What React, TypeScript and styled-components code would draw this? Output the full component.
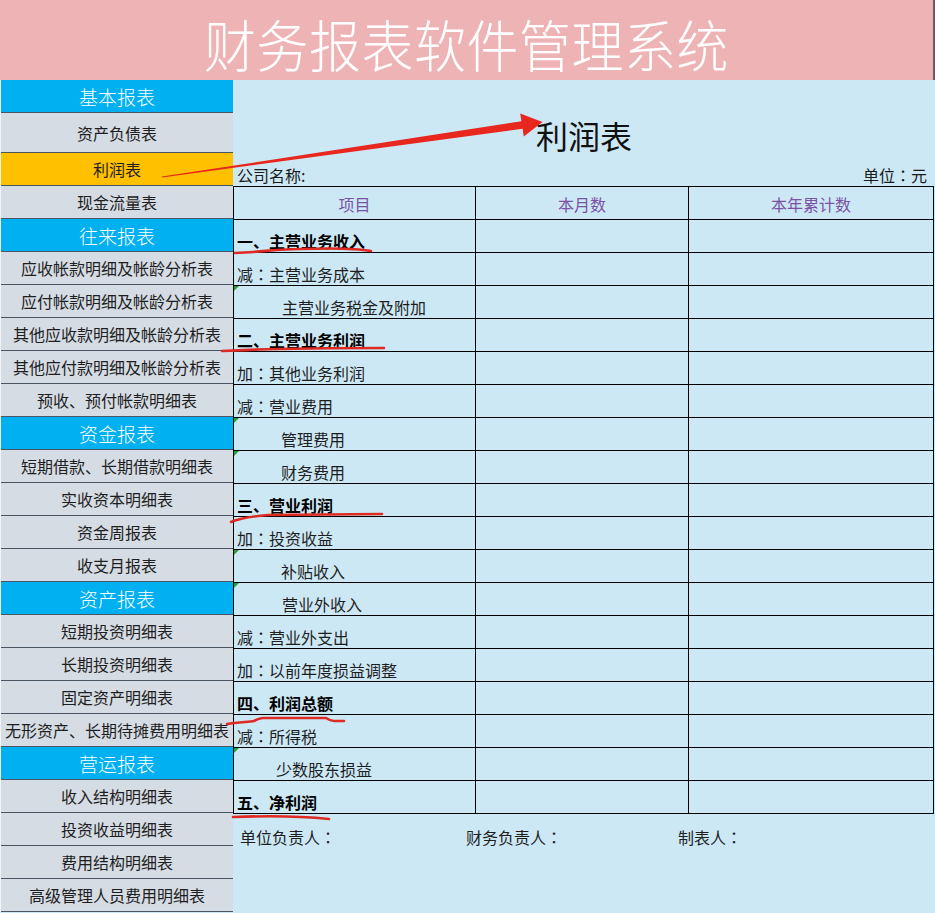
import React from "react"
import styled, { createGlobalStyle } from "styled-components"

const FONT = `"Noto Sans CJK SC", "Microsoft YaHei", "Noto Sans", sans-serif`

const GlobalStyle = createGlobalStyle`
  html, body {
    margin: 0;
    padding: 0;
    background: #ffffff;
  }
  body {
    font-family: ${FONT};
  }
  * {
    box-sizing: border-box;
  }
`

type NavEntry = {
  label: string
  kind?: "cat" | "item"
  tall?: boolean
  active?: boolean
}

const navItems: NavEntry[] = [
  { label: "基本报表", kind: "cat" },
  { label: "资产负债表", tall: true },
  { label: "利润表", active: true },
  { label: "现金流量表" },
  { label: "往来报表", kind: "cat" },
  { label: "应收帐款明细及帐龄分析表" },
  { label: "应付帐款明细及帐龄分析表" },
  { label: "其他应收款明细及帐龄分析表" },
  { label: "其他应付款明细及帐龄分析表" },
  { label: "预收、预付帐款明细表" },
  { label: "资金报表", kind: "cat" },
  { label: "短期借款、长期借款明细表" },
  { label: "实收资本明细表" },
  { label: "资金周报表" },
  { label: "收支月报表" },
  { label: "资产报表", kind: "cat" },
  { label: "短期投资明细表" },
  { label: "长期投资明细表" },
  { label: "固定资产明细表" },
  { label: "无形资产、长期待摊费用明细表" },
  { label: "营运报表", kind: "cat" },
  { label: "收入结构明细表" },
  { label: "投资收益明细表" },
  { label: "费用结构明细表" },
  { label: "高级管理人员费用明细表" },
]

type LineItem = {
  label: string
  bold?: boolean
  indent?: number
  mark?: boolean
}

const lineItems: LineItem[] = [
  { label: "一、主营业务收入", bold: true },
  { label: "减：主营业务成本" },
  { label: "主营业务税金及附加", indent: 48, mark: true },
  { label: "二、主营业务利润", bold: true },
  { label: "加：其他业务利润" },
  { label: "减：营业费用" },
  { label: "管理费用", indent: 47, mark: true },
  { label: "财务费用", indent: 47, mark: true },
  { label: "三、营业利润", bold: true },
  { label: "加：投资收益" },
  { label: "补贴收入", indent: 47, mark: true },
  { label: "营业外收入", indent: 48, mark: true },
  { label: "减：营业外支出" },
  { label: "加：以前年度损益调整" },
  { label: "四、利润总额", bold: true },
  { label: "减：所得税" },
  { label: "少数股东损益", indent: 42, mark: true },
  { label: "五、净利润", bold: true },
]

// hand-drawn red marks over the sheet
const underlines = [
  "M235 253 C 260 252, 280 249, 300 249 C 330 248, 355 248, 371 251",
  "M222 351 C 260 349, 320 348, 384 348",
  "M231 522 C 240 518, 255 516, 268 515 L 382 514",
  "M227 724 C 238 722, 248 722, 254 721 C 258 719, 260 718, 263 718 L 326 718 C 329 720, 331 721, 334 721 L 344 721",
  "M233 817 C 260 816, 300 816, 329 819",
]

// the sheet uses a centred full-width colon
const withColon = (text: string) => {
  const parts = text.split("：")
  return parts.map((part, i) => (
    <React.Fragment key={i}>
      {part}
      {i < parts.length - 1 && <Colon>：</Colon>}
    </React.Fragment>
  ))
}

export default function App() {
  return (
    <>
      <GlobalStyle />
      <Page>
        <Banner>
          <BannerTitle>财务报表软件管理系统</BannerTitle>
        </Banner>
        <Body>
          <Sidebar>
            {navItems.map((item) => (
              <NavRow
                key={item.label}
                $kind={item.kind || "item"}
                $tall={!!item.tall}
                $active={!!item.active}
              >
                {item.label}
              </NavRow>
            ))}
          </Sidebar>
          <Sheet>
            <SheetTitle>利润表</SheetTitle>
            <MetaRow>
              <span>公司名称:</span>
              <span>{withColon("单位：元")}</span>
            </MetaRow>
            <Table>
              <HeadCell>项目</HeadCell>
              <HeadCell>本月数</HeadCell>
              <HeadCell>本年累计数</HeadCell>
              {lineItems.map((row) => (
                <React.Fragment key={row.label}>
                  <LabelCell
                    $bold={!!row.bold}
                    $indent={row.indent || 3}
                    $mark={!!row.mark}
                  >
                    {withColon(row.label)}
                  </LabelCell>
                  <Cell />
                  <Cell />
                </React.Fragment>
              ))}
            </Table>
            <Signatures>
              <span>{withColon("单位负责人：")}</span>
              <span>{withColon("财务负责人：")}</span>
              <span>{withColon("制表人：")}</span>
            </Signatures>
          </Sheet>
        </Body>
        <Annotations viewBox="0 0 935 913" width="935" height="913">
          <polygon
            points="162,176.6 521.4,121.3 520.2,113.6 542.5,122 523.8,136.4 522.6,128.7 162,177.6"
            fill="#e8281f"
          />
          {underlines.map((d) => (
            <path
              key={d}
              d={d}
              fill="none"
              stroke="#de2a22"
              strokeWidth="2.6"
              strokeLinecap="round"
              strokeLinejoin="round"
            />
          ))}
        </Annotations>
      </Page>
    </>
  )
}

// Styled Components
const Page = styled.div`
  position: relative;
  width: 935px;
  height: 913px;
  overflow: hidden;
  font-family: ${FONT};
  background: #cde8f5;
`

const Banner = styled.header`
  height: 80px;
  background: #eeb4b5;
  border-right: 2px solid #6b5b5b;
  display: flex;
  align-items: center;
  justify-content: center;
  padding-top: 6px;
`

const BannerTitle = styled.h1`
  margin: 0;
  font-family: ${FONT};
  font-size: 52px;
  font-weight: 300;
  line-height: 1;
  color: #ffffff;
  letter-spacing: 0.5px;
  transform: scaleY(1.08);
`

const Body = styled.div`
  display: grid;
  grid-template-columns: 233px 702px;
`

const Sidebar = styled.nav`
  display: flex;
  flex-direction: column;
  border-left: 1px solid #f2f4f7;
`

const NavRow = styled.div<{
  $kind: "cat" | "item"
  $tall: boolean
  $active: boolean
}>`
  height: ${({ $tall }) => ($tall ? 40 : 33)}px;
  display: flex;
  align-items: center;
  justify-content: center;
  white-space: nowrap;
  border-bottom: 1px solid #4a5563;
  font-size: ${({ $kind }) => ($kind === "cat" ? 19 : 16)}px;
  font-weight: ${({ $kind }) => ($kind === "cat" ? 300 : 400)};
  color: ${({ $kind }) => ($kind === "cat" ? "#ffffff" : "#1e1e1e")};
  background: ${({ $kind, $active }) =>
    $active ? "#ffc000" : $kind === "cat" ? "#00b0f0" : "#d6dce4"};
`

const Sheet = styled.main`
  display: flex;
  flex-direction: column;
  background: #cde8f5;
`

const SheetTitle = styled.div`
  height: 84px;
  padding-top: 39px;
  text-align: center;
  font-size: 32px;
  line-height: 32px;
  color: #111111;
`

const MetaRow = styled.div`
  height: 22px;
  display: flex;
  justify-content: space-between;
  padding: 0 8px 0 4px;
  font-size: 16px;
  line-height: 22px;
  color: #1a1a1a;
`

const Colon = styled.span`
  font-family: "Noto Sans CJK TC", ${FONT};
  font-weight: 400;
`

const Table = styled.div`
  display: grid;
  grid-template-columns: 242px 213px 245px;
  width: 701px;
  border-top: 1px solid #000000;
  border-left: 1px solid #000000;
`

const Cell = styled.div`
  position: relative;
  height: 33px;
  border-right: 1px solid #000000;
  border-bottom: 1px solid #000000;
`

const HeadCell = styled(Cell)`
  display: flex;
  align-items: center;
  justify-content: center;
  font-size: 16px;
  color: #7a52a6;
  padding-top: 2px;
`

const LabelCell = styled(Cell)<{ $bold: boolean; $indent: number; $mark: boolean }>`
  display: flex;
  align-items: flex-end;
  padding-left: ${({ $indent }) => $indent}px;
  padding-bottom: 1px;
  font-size: 16px;
  line-height: 20px;
  white-space: nowrap;
  font-weight: ${({ $bold }) => ($bold ? 700 : 400)};
  color: ${({ $bold }) => ($bold ? "#000000" : "#1e1e1e")};

  &::before {
    content: "";
    display: ${({ $mark }) => ($mark ? "block" : "none")};
    position: absolute;
    top: 0;
    left: 0;
    border-top: 5px solid #2f9a3e;
    border-right: 5px solid transparent;
  }
`

const Signatures = styled.div`
  display: grid;
  grid-template-columns: 226px 212px auto;
  padding: 12px 0 0 7px;
  font-size: 16px;
  line-height: 22px;
  color: #1e1e1e;
`

const Annotations = styled.svg`
  position: absolute;
  top: 0;
  left: 0;
  pointer-events: none;
`
